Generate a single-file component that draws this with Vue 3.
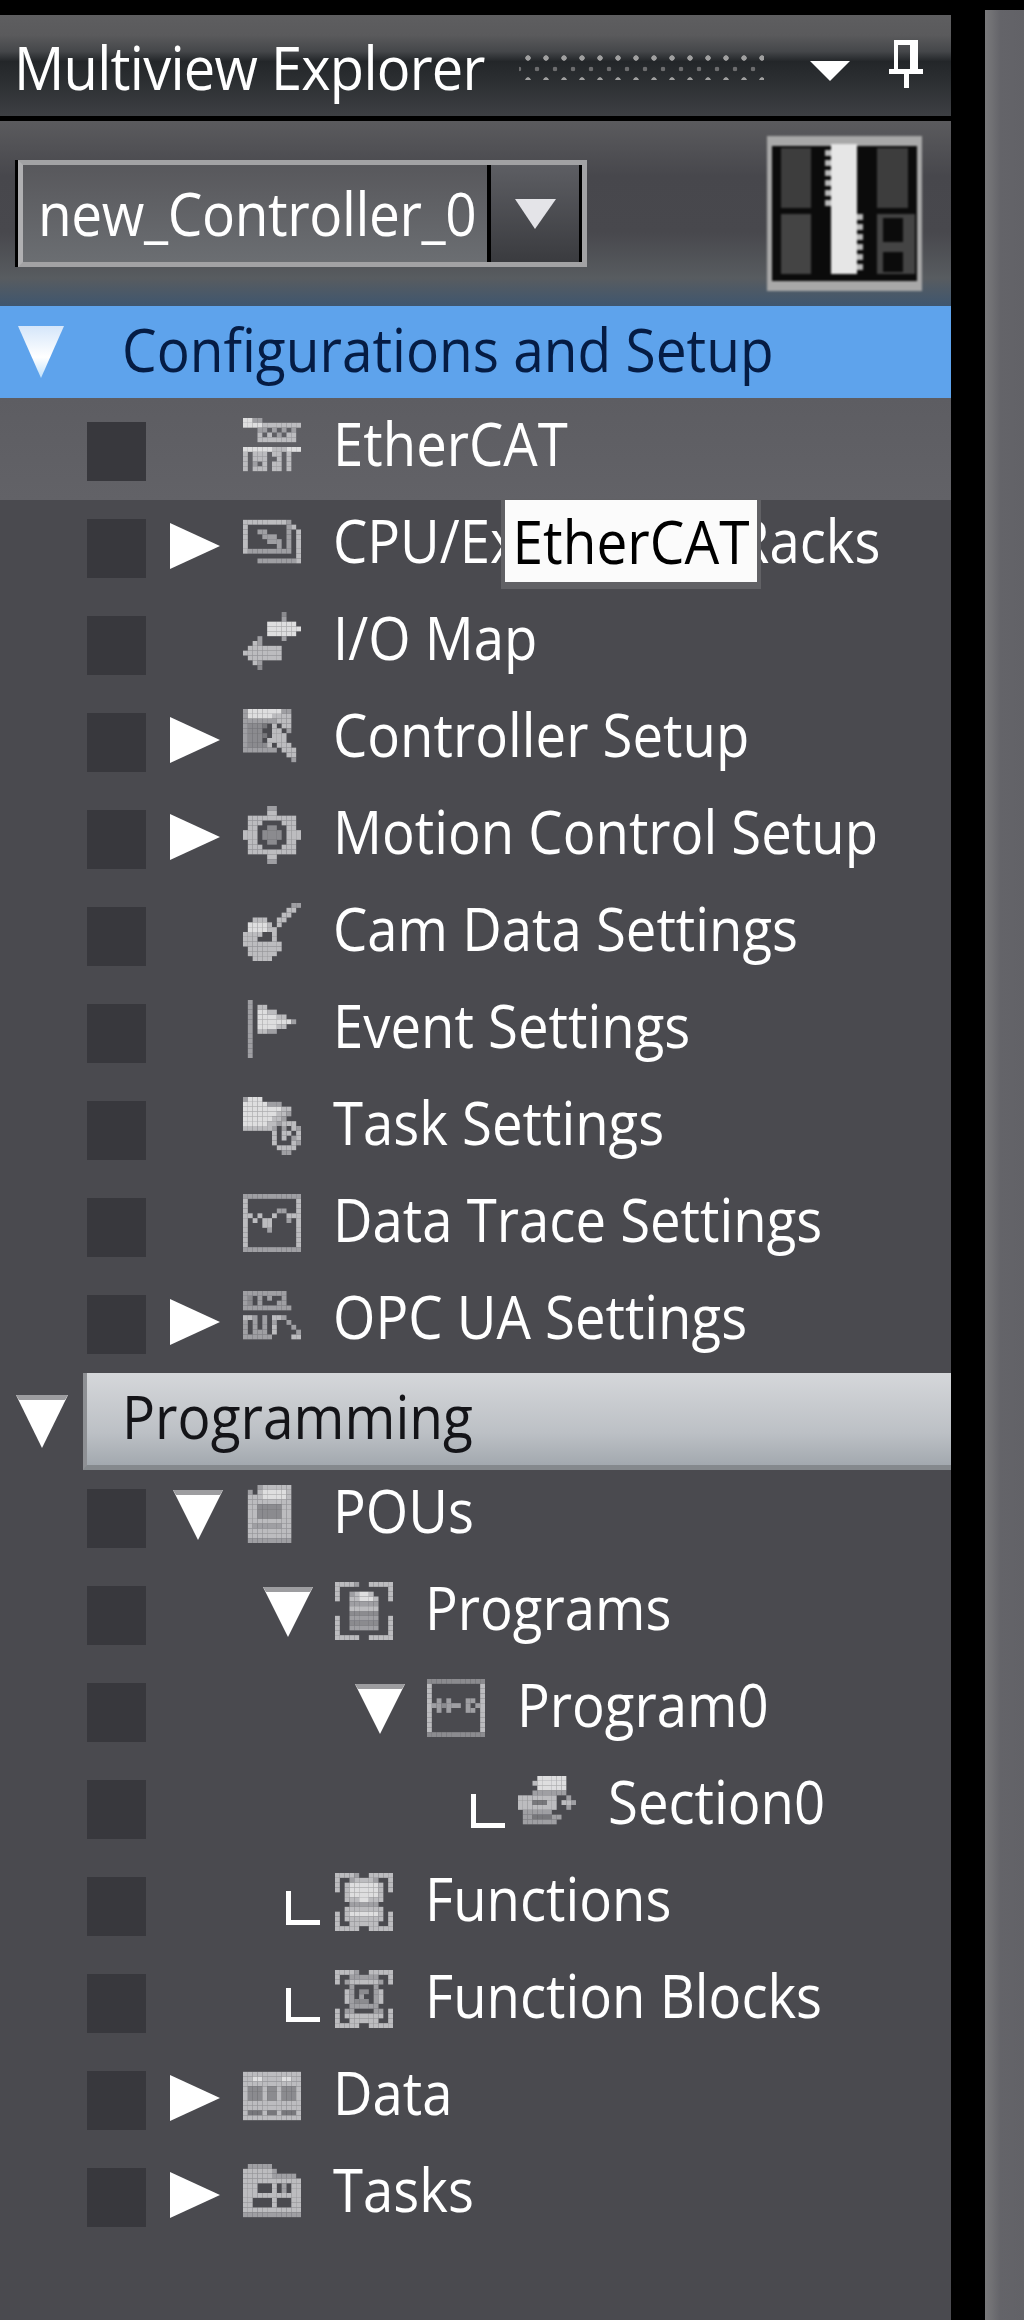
<script setup>
// every icon is a 12x12 grid, one char per source pixel: . = none, 5-9 = grey level
const icons = {
  ecat: ['9977........', '999988888888', '...77.7.7.7.', '...8.8.7.88.', '...88888888.', '............', '999999888999', '8.888.88.8..', '8.888..8.8..', '8.7.8.88.8..', '8.888.88.8..', '............'],
  cpu: ['............', '8888888887..', '8........78.', '8..77....7.8', '8...777..7.8', '8....777.7.8', '8......7.7.8', '8777777777.8', '...........8', '...777777778', '............', '............'],
  io: ['........6...', '........7...', '.....999999.', '.....9999999', '.....999999.', '...7....7...', '..87........', '.8888888....', '88888888....', '.8888888....', '..87........', '...6........'],
  setup: ['7999999977..', '7999998888..', '7777777888..', '76665.8.88..', '7666..88.7..', '76665.888...', '7666.8888...', '766668.888..', '7777777.888.', '.........88.', '..........7.', '............'],
  gear: ['.....77.....', '.....88.....', '.8888888888.', '.888....888.', '.88..66..88.', '888.6666.888', '888.6666.888', '.88..66..88.', '.888....888.', '.8888888888.', '.....88.....', '.....77.....'],
  cam: ['..........77', '.........88.', '........88..', '..888..88...', '.99998.8....', '.999988.....', '8888..8.....', '888...8.....', '88888888....', '.8888888....', '.888888.....', '..8888......'],
  flag: ['.7..........', '.7.88.......', '.7.9988.....', '.7.999988...', '.7.99999997.', '.7.999988...', '.7.8877.....', '.7..........', '.7..........', '.7..........', '.7..........', '.7..........'],
  folder: ['7999........', '99999777....', '9999999988..', '9999999887..', '999999887...', '99999887888.', '8888887.7.87', '......8.88.8', '......8.8.78', '......8...87', '.......8888.', '........77..'],
  trace: ['777777777777', '8..........8', '8..........8', '8......77..8', '88.8..8..888', '8.8.88...7.8', '8...88.....8', '8....7.....8', '8..........8', '8..........8', '8..........8', '777777777777'],
  opc: ['777777777...', '76.7.7..7...', '76.7...77...', '7777777777..', '............', '887.7.887...', '7.7.7.7..7..', '7.7.7.8...7.', '7.777.8....7', '777777....88', '............', '............'],
  pou: ['...7888888..', '.7.8999998..', '.888999998..', '.888888888..', '.886666688..', '.886666688..', '.886666688..', '.888888888..', '.877777788..', '.888888888..', '.888888888..', '.777777777..'],
  prog: ['88887..88888', '8..........8', '8..78998...8', '8..889998..8', '...777777...', '...888888...', '...666666...', '8..777777..8', '8..666666..8', '8..777777..8', '8..........8', '88888..88888'],
  ladder: ['666666666666', '8..........8', '8..........8', '8..........8', '8.7.7...77.8', '8776777.7.78', '8.7.7...77.8', '8..........8', '8..........8', '8..........8', '8..........8', '666666666666'],
  section: ['....999999..', '...8999999..', '....999999..', '...7777777..', '88888888..7.', '88855588.887', '88888888..7.', '.777777.....', '.77555577...', '.7777777....', '............', '............'],
  func: ['88887..88888', '8..788887..8', '8.89999998.8', '8.89999998.8', '..89999998..', '..88899888..', '...777777...', '..88888888..', '8.89999998.8', '8.88888888.8', '8..888888..8', '88888..88888'],
  fb: ['88887..88888', '8..777777..8', '8.78888887.8', '...7....7...', '..87.66.78..', '..87.7..78..', '..87666.78..', '...777777...', '8.77....77.8', '8.88888888.8', '8..888888..8', '88888..88888'],
  data: ['............', '888888888888', '889988889988', '888888888888', '866686686668', '866686686668', '866686686668', '888888888888', '888888888888', '855585585558', '888888888888', '............'],
  tasks: ['.77777......', '8888887.....', '88888877777.', '888888888888', '888...8.7.88', '888...8.7.88', '888888888888', '88....8...88', '88....8...88', '888888888888', '777777777777', '............'],
};

const shades = { 5: '#77777b', 6: '#8b8b8f', 7: '#9f9fa3', 8: '#bcbcbf', 9: '#dededf' };

function pixels(name) {
  const out = [];
  icons[name].forEach((row, y) => {
    [...row].forEach((c, x) => {
      if (c !== '.') out.push({ x, y, fill: shades[c] });
    });
  });
  return out;
}

// level = tree indent, arrow: right / down / corner / none
const configRows = [
  { text: 'CPU/Expansion Racks', icon: 'cpu', level: 0, arrow: 'right' },
  { text: 'I/O Map', icon: 'io', level: 0, arrow: 'none' },
  { text: 'Controller Setup', icon: 'setup', level: 0, arrow: 'right' },
  { text: 'Motion Control Setup', icon: 'gear', level: 0, arrow: 'right' },
  { text: 'Cam Data Settings', icon: 'cam', level: 0, arrow: 'none' },
  { text: 'Event Settings', icon: 'flag', level: 0, arrow: 'none' },
  { text: 'Task Settings', icon: 'folder', level: 0, arrow: 'none' },
  { text: 'Data Trace Settings', icon: 'trace', level: 0, arrow: 'none' },
  { text: 'OPC UA Settings', icon: 'opc', level: 0, arrow: 'right' },
];

const progRows = [
  { text: 'POUs', icon: 'pou', level: 0, arrow: 'down' },
  { text: 'Programs', icon: 'prog', level: 1, arrow: 'down' },
  { text: 'Program0', icon: 'ladder', level: 2, arrow: 'down' },
  { text: 'Section0', icon: 'section', level: 3, arrow: 'corner' },
  { text: 'Functions', icon: 'func', level: 1, arrow: 'corner' },
  { text: 'Function Blocks', icon: 'fb', level: 1, arrow: 'corner' },
  { text: 'Data', icon: 'data', level: 0, arrow: 'right' },
  { text: 'Tasks', icon: 'tasks', level: 0, arrow: 'right' },
];
</script>

<template>
  <div class="screen">
    <div class="panel">
      <div class="title-bar">
        <span class="title">Multiview Explorer</span>
        <div class="gripper"></div>
        <svg class="menu-arrow" width="40" height="20" viewBox="0 0 40 20"><path d="M0 0H40L20 20Z" fill="#fff" /></svg>
        <svg class="pin" width="34" height="48" viewBox="0 0 34 48">
          <path d="M5 0H29V29H34V34H20V48H15V34H0V29H5ZM9 5V29H21V5Z" fill="#fff" fill-rule="evenodd" />
        </svg>
      </div>

      <div class="toolbar">
        <div class="combo">
          <span class="combo-text">new_Controller_0</span>
          <div class="combo-btn">
            <svg width="41" height="30" viewBox="0 0 41 30"><path d="M0 0H41L20 30Z" fill="#e4e4e8" /></svg>
          </div>
        </div>
        <svg class="device" width="155" height="155" viewBox="0 0 155 155">
          <rect width="155" height="155" fill="#a8a8a8" />
          <rect x="5" y="10" width="145" height="135" fill="#0b0b0b" />
          <rect x="14" y="12" width="30" height="60" fill="#3d3d3d" />
          <rect x="14" y="78" width="30" height="60" fill="#444" />
          <rect x="110" y="12" width="31" height="60" fill="#3d3d3d" />
          <rect x="110" y="78" width="38" height="60" fill="#444" />
          <rect x="116" y="82" width="20" height="24" fill="#0b0b0b" />
          <rect x="116" y="116" width="20" height="20" fill="#0b0b0b" />
          <rect x="64" y="8" width="26" height="130" fill="#e6e6e6" />
          <path d="M58 14h6v6h-6zM58 24h6v6h-6zM58 34h6v6h-6zM58 44h6v6h-6zM58 54h6v6h-6zM58 64h6v6h-6z" fill="#bbb" />
          <path d="M90 78h6v6h-6zM90 88h6v6h-6zM90 98h6v6h-6zM90 108h6v6h-6zM90 118h6v6h-6zM90 128h6v6h-6z" fill="#bbb" />
        </svg>
      </div>

      <div class="section section-blue">
        <svg class="section-arrow" width="46" height="52" viewBox="0 0 46 52">
          <defs>
            <linearGradient id="arrowBlue" x1="0" y1="0" x2="0" y2="1">
              <stop offset="0" stop-color="#d5e6fa" />
              <stop offset="0.6" stop-color="#fff" />
              <stop offset="1" stop-color="#bfe0fb" />
            </linearGradient>
          </defs>
          <path d="M0 0H46L23 52Z" fill="url(#arrowBlue)" />
        </svg>
        <span class="section-label">Configurations and Setup</span>
      </div>

      <div class="row row-active">
        <div class="check"></div>
        <svg class="icon" width="58" height="58" viewBox="0 0 12 12">
          <rect v-for="(p, i) in pixels('ecat')" :key="i" :x="p.x" :y="p.y" width="1" height="1" :fill="p.fill" />
        </svg>
        <span class="label">EtherCAT</span>
      </div>

      <div v-for="r in configRows" :key="r.text" class="row">
        <div class="check"></div>
        <div class="tree" :class="'level-' + r.level">
          <svg v-if="r.arrow === 'right'" class="arrow" width="50" height="46" viewBox="0 0 50 46"><path d="M0 0L50 23L0 46Z" fill="#fff" /></svg>
        </div>
        <svg class="icon" width="58" height="58" viewBox="0 0 12 12">
          <rect v-for="(p, i) in pixels(r.icon)" :key="i" :x="p.x" :y="p.y" width="1" height="1" :fill="p.fill" />
        </svg>
        <span class="label">{{ r.text }}</span>
      </div>

      <div class="section section-grey">
        <svg class="section-arrow" width="52" height="53" viewBox="0 0 52 53">
          <path d="M0 0H52L26 53Z" fill="#fff" />
          <path d="M0 0H52L49 5H3Z" fill="#9d9da0" />
        </svg>
        <div class="section-bar"><span class="section-label">Programming</span></div>
      </div>

      <div v-for="r in progRows" :key="r.text" class="row">
        <div class="check"></div>
        <div class="tree" :class="'level-' + r.level">
          <svg v-if="r.arrow === 'right'" class="arrow" width="50" height="46" viewBox="0 0 50 46"><path d="M0 0L50 23L0 46Z" fill="#fff" /></svg>
          <svg v-else-if="r.arrow === 'down'" class="arrow arrow-down" width="50" height="50" viewBox="0 0 50 50">
            <path d="M0 0H50L25 50Z" fill="#fff" />
            <path d="M0 0H50L47 5H3Z" fill="#9d9da0" />
          </svg>
          <svg v-else class="corner" width="34" height="34" viewBox="0 0 34 34"><path d="M0 0H5V29H34V34H0Z" fill="#fff" /></svg>
        </div>
        <svg class="icon" width="58" height="58" viewBox="0 0 12 12">
          <rect v-for="(p, i) in pixels(r.icon)" :key="i" :x="p.x" :y="p.y" width="1" height="1" :fill="p.fill" />
        </svg>
        <span class="label">{{ r.text }}</span>
      </div>

      <div class="tooltip"><span class="tooltip-text">EtherCAT</span></div>
    </div>
    <div class="side-panel"></div>
  </div>
</template>

<style>
body {
  background: #000;
}
</style>

<style scoped>
.screen {
  width: 1024px;
  height: 2320px;
  background: #000;
  display: flex;
  justify-content: space-between;
  overflow: hidden;
  font-family: "Open Sans", "Liberation Sans", sans-serif;
}

.panel {
  position: relative;
  width: 951px;
  height: 2305px;
  margin-top: 15px;
  background: #4a4a4f;
}

.side-panel {
  width: 39px;
  margin-top: 10px;
  background: linear-gradient(to right, #7a7a7c, #646469 40%, #626267);
}

.title-bar {
  height: 101px;
  display: flex;
  align-items: center;
  padding-left: 14px;
  border-bottom: 5px solid #000;
  box-sizing: content-box;
  background: linear-gradient(to bottom, #5e5e60 0%, #5a5a5c 20%, #45474a 36%, #232629 46%, #2e3134 70%, #3d3f43 100%);
}

.title {
  width: 505px;
  flex: none;
  color: #fff;
  font-size: 56px;
  line-height: 1;
  letter-spacing: -0.75px;
  display: inline-block;
  transform: scaleY(1.08);
  transform-origin: left center;
  white-space: nowrap;
}

.gripper {
  width: 245px;
  height: 28px;
  flex: none;
  background-image:
    radial-gradient(circle, #a0a0a0 2.4px, transparent 3px),
    radial-gradient(circle, #6c6c6e 2px, transparent 2.6px);
  background-size: 18px 22px, 18px 22px;
  background-position: 0 -5px, 9px 6px;
}

.menu-arrow {
  flex: none;
  margin-left: 46px;
  margin-top: 10px;
}

.pin {
  flex: none;
  margin-left: 39px;
  margin-top: -4px;
}

.toolbar {
  height: 185px;
  display: flex;
  align-items: center;
  justify-content: space-between;
  padding: 0 29px 0 18px;
  background: linear-gradient(to bottom, #5b5b5e 0%, #47474c 30%, #48484d 60%, #585c60 85%, #3f566e 100%);
}

.combo {
  width: 569px;
  height: 107px;
  display: flex;
  box-sizing: border-box;
  border: 5px solid #a2a2a4;
  border-left-color: #b0b0b2;
  box-shadow: -3px 0 0 #000;
  background: linear-gradient(to bottom, #58585c, #6b6e72);
}

.combo-text {
  width: 464px;
  flex: none;
  box-sizing: border-box;
  padding-left: 15px;
  padding-top: 2px;
  color: #fff;
  font-size: 55px;
  line-height: 92px;
  letter-spacing: -0.4px;
  transform: scaleY(1.1);
  transform-origin: left center;
  white-space: nowrap;
}

.combo-btn {
  flex: 1;
  display: flex;
  align-items: center;
  justify-content: center;
  border-left: 4px solid #000;
  border-right: 3px solid #000;
  background: linear-gradient(to bottom, #5d5e63, #3a3b3f);
}

.device {
  display: block;
  filter: blur(1px);
}

.section {
  display: flex;
  align-items: center;
}

.section-blue {
  height: 92px;
  background: #5ea3ec;
  padding-left: 18px;
}

.section-blue .section-label {
  margin-left: 58px;
  color: #051c44;
}

.section-grey {
  height: 97px;
  padding-left: 16px;
}

.section-bar {
  flex: 1;
  align-self: stretch;
  margin-left: 15px;
  padding-left: 35px;
  display: flex;
  align-items: center;
  border-left: 4px solid #8e9094;
  border-bottom: 5px solid #85898d;
  background: linear-gradient(to bottom, #d5d7da, #bcc0c5 65%, #a3a9af 100%);
}

.section-grey .section-label {
  color: #141418;
}

.section-label {
  display: inline-block;
  font-size: 55px;
  line-height: 1;
  transform: scaleY(1.1);
  margin-top: -8px;
  white-space: nowrap;
}

.row {
  height: 97px;
  display: flex;
  align-items: center;
  padding-left: 87px;
}

.row-active {
  height: 102px;
  padding-top: 5px;
  box-sizing: border-box;
  background: linear-gradient(to bottom, #5d5d62, #626267);
}

.check {
  width: 59px;
  height: 59px;
  flex: none;
  background: #38383d;
}

.tree {
  flex: none;
  width: 97px;
  padding-left: 24px;
  box-sizing: border-box;
  display: flex;
  align-items: center;
}

.level-1 {
  width: 189px;
  padding-left: 117px;
}

.level-2 {
  width: 281px;
  padding-left: 209px;
}

.level-3 {
  width: 372px;
  padding-left: 325px;
}

.arrow {
  display: block;
  margin-top: -6px;
}

.arrow-down {
  margin-left: 3px;
  margin-top: -8px;
}

.level-1 .arrow-down,
.level-2 .arrow-down {
  margin-left: 0;
}

.corner {
  display: block;
  margin-top: 3px;
}

.level-1 .corner {
  margin-left: 23px;
}

.icon {
  flex: none;
  display: block;
  margin-top: -10px;
}

.row-active .icon {
  margin-left: 97px;
}

.label {
  display: inline-block;
  margin-left: 32px;
  margin-top: -16px;
  color: #fff;
  font-size: 54.5px;
  line-height: 1;
  transform: scaleY(1.1);
  white-space: nowrap;
}

.tooltip {
  position: absolute;
  left: 505px;
  top: 485px;
  width: 252px;
  height: 82px;
  background: #fbfbfb;
  box-shadow: 0 3px 0 4px #616165;
  color: #000;
  font-size: 55px;
  line-height: 82px;
  text-align: center;
  white-space: nowrap;
}

.tooltip-text {
  display: inline-block;
  transform: scaleY(1.1);
}
</style>
